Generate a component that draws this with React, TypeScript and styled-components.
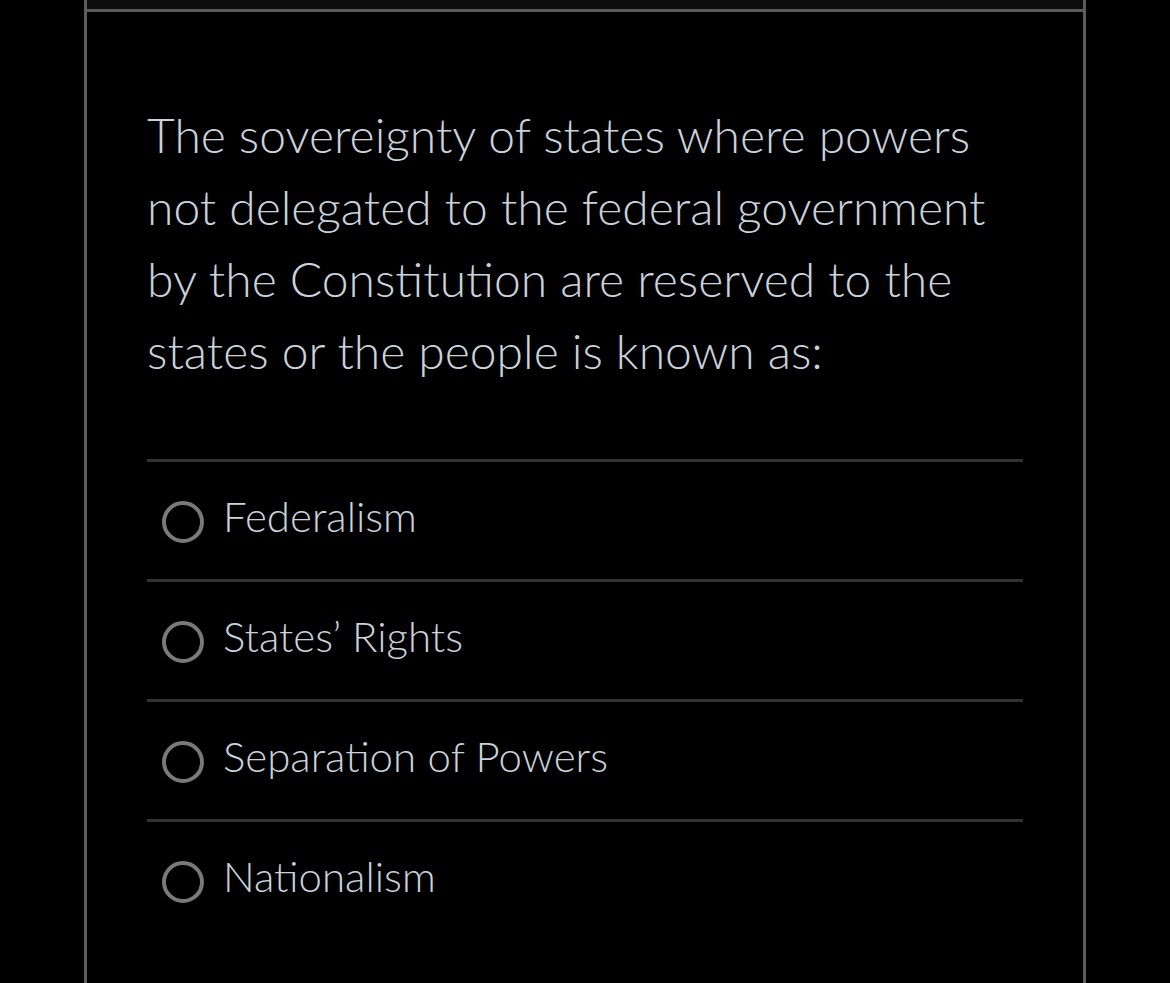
import styled, { createGlobalStyle } from 'styled-components';

const QUESTION =
  'The sovereignty of states where powers not delegated to the federal government by the Constitution are reserved to the states or the people is known as:';

const OPTIONS = ['Federalism', 'States’ Rights', 'Separation of Powers', 'Nationalism'];

const GlobalStyle = createGlobalStyle`
  html, body {
    margin: 0;
    padding: 0;
    background: #000000;
  }

  body {
    font-family: Lato, "Noto Sans", "Liberation Sans", sans-serif;
    -webkit-font-smoothing: antialiased;
  }
`;

const App = () => {
  return (
    <>
      <GlobalStyle />
      <Page>
        <Frame>
          <PrevCardEdge />
          <QuestionCard>
            <QuestionText>{QUESTION}</QuestionText>
            <OptionList role="radiogroup">
              {OPTIONS.map((option) => (
                <OptionRow key={option} role="radio" aria-checked="false">
                  <RadioCircle />
                  <OptionLabel>{option}</OptionLabel>
                </OptionRow>
              ))}
            </OptionList>
          </QuestionCard>
        </Frame>
      </Page>
    </>
  );
};

const Page = styled.main`
  min-height: 983px;
  background: #000000;
  padding-left: 84px;
  overflow: hidden;
`;

const Frame = styled.div`
  width: 1002px;
  min-height: 983px;
  box-sizing: border-box;
  border-left: 3px solid #5c5c5c;
  border-right: 3px solid #5c5c5c;
  display: flex;
  flex-direction: column;
`;

const PrevCardEdge = styled.div`
  height: 9px;
  background: #0c0c0c;
`;

const QuestionCard = styled.section`
  flex: 1;
  border-top: 3px solid #5c5c5c;
  padding: 87px 60px 0;
  display: flex;
  flex-direction: column;
`;

const QuestionText = styled.p`
  margin: 0 0 72px;
  color: #c9d3dc;
  font-size: 48px;
  font-weight: 300;
  line-height: 72px;
`;

const OptionList = styled.div`
  display: flex;
  flex-direction: column;
`;

const OptionRow = styled.div`
  height: 120px;
  box-sizing: border-box;
  border-top: 3px solid #333333;
  display: flex;
  align-items: center;
  gap: 19px;
  padding: 3px 0 0 15px;
`;

const RadioCircle = styled.span`
  width: 42px;
  height: 42px;
  box-sizing: border-box;
  border: 4px solid #797979;
  border-radius: 50%;
  flex-shrink: 0;
`;

const OptionLabel = styled.span`
  margin-bottom: 12px;
  color: #c9d3dc;
  font-size: 42px;
  font-weight: 300;
  line-height: 1;
`;

export default App;
